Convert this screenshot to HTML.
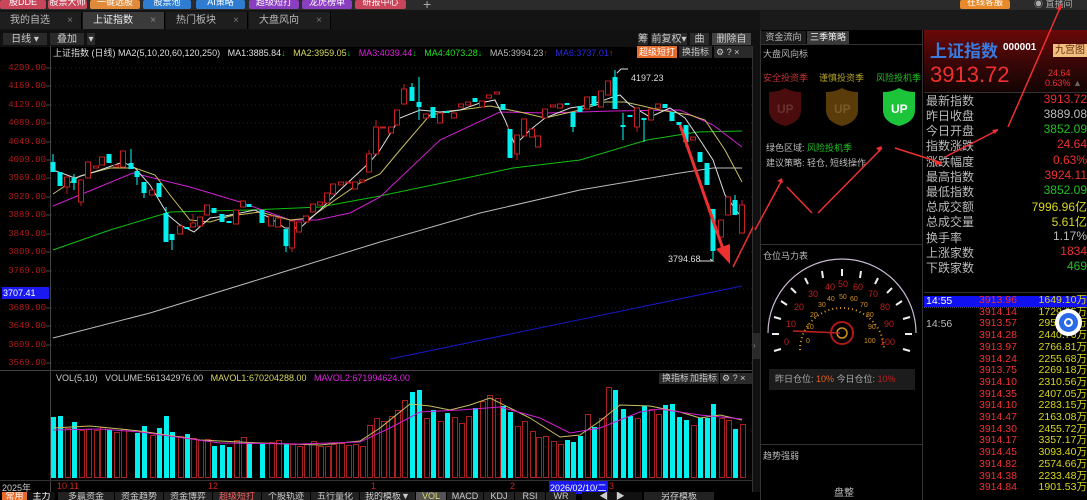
<!DOCTYPE html>
<html><head><meta charset="utf-8">
<style>
*{margin:0;padding:0;box-sizing:border-box}
body{width:1087px;height:500px;background:#000;overflow:hidden;position:relative;font-family:"Liberation Sans","Noto Sans CJK SC",sans-serif;font-size:10px;color:#ccc}
.a{position:absolute;white-space:nowrap}
.btn{position:absolute;top:0;height:9px;border-radius:2px;color:#fff;font-size:9px;line-height:4px;text-align:center;overflow:hidden}
.tab{position:absolute;top:12px;height:17px;background:#1e1e1e;color:#bbb;font-size:10px;line-height:17px;padding-left:10px;border-right:1px solid #000}
.tb{position:absolute;top:32px;height:14px;background:#2a2a2a;color:#ccc;font-size:10px;line-height:14px;text-align:center;border:1px solid #111}
.yl{position:absolute;left:0;width:46px;text-align:right;color:#b01818;font-size:9px;font-family:"Liberation Mono",monospace}
.bt{position:absolute;top:492px;height:8px;background:#222;color:#ccc;font-size:9px;line-height:9px;text-align:center;overflow:hidden}
.ql{position:absolute;left:926px;font-size:12px;color:#bbb}
.qv{position:absolute;right:0;font-size:12px;text-align:right}
.tk{position:absolute;font-size:10.5px;font-family:"Liberation Sans","Noto Sans CJK SC",sans-serif}
</style></head><body>
<!-- top bar -->
<div class="a" style="left:0;top:0;width:1087px;height:10px;background:#2b2b2b"></div>
<div class="btn" style="left:0;width:46px;background:#c8455a">股DDE</div>
<div class="btn" style="left:48px;width:39px;background:#c8455a">股票大师</div>
<div class="btn" style="left:90px;width:50px;background:#e08a3a">一键选股</div>
<div class="btn" style="left:143px;width:48px;background:#2e7dd0">股票池</div>
<div class="btn" style="left:196px;width:49px;background:#2e7dd0">AI策略</div>
<div class="btn" style="left:249px;width:50px;background:#8a3ec0">超级短打</div>
<div class="btn" style="left:302px;width:50px;background:#8a3ec0">龙虎榜单</div>
<div class="btn" style="left:355px;width:51px;background:#c8455a">研报中心</div>
<div class="a" style="left:423px;top:-4px;color:#aaa;font-size:14px">+</div>
<div class="btn" style="left:960px;width:50px;background:#e88a2a">在线客服</div>
<div class="a" style="left:1034px;top:-3px;color:#aaa;font-size:9px">◉ 直播间</div>
<!-- tabs -->
<div class="a" style="left:0;top:10px;width:760px;height:20px;background:#141414"></div>
<div class="a" style="left:760px;top:10px;width:327px;height:20px;background:#1a1a1a"></div>
<div class="tab" style="left:0;width:82px">我的自选<span style="position:absolute;right:8px;color:#777">×</span></div>
<div class="tab" style="left:83px;width:82px;background:#3a3a3a;color:#eee">上证指数<span style="position:absolute;right:8px;color:#888">×</span></div>
<div class="tab" style="left:166px;width:82px">热门板块<span style="position:absolute;right:8px;color:#777">×</span></div>
<div class="tab" style="left:249px;width:82px">大盘风向<span style="position:absolute;right:8px;color:#777">×</span></div>
<!-- toolbar -->
<div class="a" style="left:0;top:30px;width:760px;height:17px;background:#111"></div>
<div class="tb" style="left:2px;width:46px">日线 ▾</div>
<div class="tb" style="left:49px;width:36px">叠加</div>
<div class="tb" style="left:86px;width:10px">▾</div>
<div class="tb" style="left:637px;width:12px">筹</div>
<div class="tb" style="left:650px;width:38px">前复权▾</div>
<div class="tb" style="left:689px;width:21px">曲线</div>
<div class="tb" style="left:711px;width:41px;background:#444">删除自选</div>
<!-- chart header -->
<div class="a" style="left:53px;top:46px;font-size:9px;color:#ddd">上证指数 (日线) MA2(5,10,20,60,120,250) &nbsp; MA1:3885.84<span style="color:#0c0">↓</span> &nbsp; <span style="color:#d8d860">MA2:3959.05<span style="color:#0c0">↓</span></span> &nbsp; <span style="color:#e020e0">MA3:4039.44<span style="color:#0c0">↓</span></span> &nbsp; <span style="color:#20e020">MA4:4073.28<span style="color:#0c0">↓</span></span> &nbsp; <span style="color:#bbb">MA5:3994.23<span style="color:#e02020">↑</span></span> &nbsp; <span style="color:#2a2ae0">MA6:3737.01<span style="color:#e02020">↑</span></span></div>
<div class="a" style="left:637px;top:46px;width:40px;height:12px;background:#e86a2a;color:#fff;font-size:9px;text-align:center;line-height:12px">超级短打</div>
<div class="a" style="left:679px;top:46px;width:33px;height:12px;background:#2a2a2a;color:#ccc;font-size:9px;text-align:center;line-height:12px">换指标</div>
<div class="a" style="left:714px;top:46px;width:38px;height:12px;background:#2a2a2a;color:#ccc;font-size:9px;line-height:12px;padding-left:2px">⚙ ? ×</div>
<!-- left axis -->
<div class="a" style="left:50px;top:46px;width:1px;height:446px;background:#444"></div>
<div class="a" style="left:0;top:370px;width:760px;height:1px;background:#444"></div>
<div class="a" style="left:752px;top:46px;width:1px;height:446px;background:#333"></div>
<div class="yl" style="top:63px">4209.00</div>
<div class="yl" style="top:81px">4169.00</div>
<div class="yl" style="top:100px">4129.00</div>
<div class="yl" style="top:118px">4089.00</div>
<div class="yl" style="top:137px">4049.00</div>
<div class="yl" style="top:155px">4009.00</div>
<div class="yl" style="top:173px">3969.00</div>
<div class="yl" style="top:192px">3929.00</div>
<div class="yl" style="top:210px">3889.00</div>
<div class="yl" style="top:229px">3849.00</div>
<div class="yl" style="top:247px">3809.00</div>
<div class="yl" style="top:266px">3769.00</div>
<div class="yl" style="top:303px">3689.00</div>
<div class="yl" style="top:321px">3649.00</div>
<div class="yl" style="top:340px">3609.00</div>
<div class="yl" style="top:358px">3569.00</div>
<div class="a" style="left:2px;top:287px;width:47px;height:12px;background:#1a1af0;color:#fff;font-size:9px;line-height:12px;padding-left:1px">3707.41</div>

<svg class="a" style="left:0;top:0" width="760" height="500">
<g stroke="#3a1a1a" stroke-dasharray="1,3" stroke-width="1">
<path d="M51 68H752M51 86H752M51 105H752M51 123H752M51 142H752M51 160H752M51 178H752M51 197H752M51 215H752M51 234H752M51 252H752M51 271H752M51 289H752M51 308H752M51 326H752M51 345H752M51 363H752"/>
</g>
<g stroke="#444" stroke-width="1"><path d="M46 68h4M46 86h4M46 105h4M46 123h4M46 142h4M46 160h4M46 178h4M46 197h4M46 215h4M46 234h4M46 252h4M46 271h4M46 308h4M46 326h4M46 345h4M46 363h4"/></g>
<g fill="none" stroke-width="1">
<polyline stroke="#1818c8" points="390,359 742,286"/>
<polyline stroke="#bbb" points="53,338 150,313 267,277 380,242 480,213 580,190 680,173 713,168 742,168"/>
<polyline stroke="#10c010" points="53,250 110,230 170,212 250,210 320,207 380,196 447,182 513,168 580,160 647,140 697,132 742,131"/>
<polyline stroke="#d020d0" points="53,206 133,173 190,187 240,202 290,220 317,220 350,213 380,197 440,140 500,112 547,113 613,111 680,110 713,125 742,147"/>
<polyline stroke="#c8c060" points="53,194 80,176 110,168 135,168 155,175 170,195 190,220 210,222 230,216 260,212 290,220 310,218 335,200 360,183 380,174 400,150 430,115 460,110 490,106 520,112 545,118 580,110 605,102 625,102 660,110 690,115 705,120 725,150 742,182"/>
<polyline stroke="#ddd" points="53,170 75,178 100,170 123,162 135,168 150,185 168,215 180,225 194,232 210,218 225,216 240,213 255,210 270,218 285,228 300,228 320,210 340,190 370,162 380,150 400,118 420,110 440,112 460,110 480,103 495,100 505,120 515,145 530,130 545,118 570,108 590,105 610,98 620,95 630,105 650,117 670,108 685,118 700,140 713,160 725,195 742,218"/>
</g>
<path stroke="#0ff" stroke-width="1" d="M53 154V172M74 174V190M131 149V169M137 177V185M144 193V198M166 207V213M172 240V250M286 246V252M412 83V101M419 77V120M615 70V109M623 113V140M644 120V142M713 251V260M735 195V215M686 142V147M573 127V132"/>
<path stroke="#c02020" stroke-width="1" d="M67 187V194M193 214V227M292 248V252M376 120V127M404 84V89M508 125V130M517 154V160M637 127V132M742 200V205M81 202V206M369 150V154"/>
<g fill="#00f0f0">
<rect x="50.5" y="162" width="5" height="10"/><rect x="57.5" y="172" width="5" height="14"/><rect x="71.5" y="178" width="5" height="5"/><rect x="106.5" y="154" width="5" height="9"/><rect x="128.5" y="163" width="5" height="6"/><rect x="134.5" y="171" width="5" height="6"/><rect x="141.5" y="182" width="5" height="11"/><rect x="156.5" y="183" width="5" height="14"/><rect x="163.5" y="213" width="5" height="29"/><rect x="169.5" y="234" width="5" height="6"/><rect x="184.5" y="227" width="5" height="2"/><rect x="211.5" y="208" width="5" height="5"/><rect x="219.5" y="214" width="5" height="8"/><rect x="226.5" y="221" width="5" height="2"/><rect x="246.5" y="204" width="5" height="3"/><rect x="259.5" y="210" width="5" height="13"/><rect x="283.5" y="229" width="5" height="17"/>
<rect x="409.5" y="87" width="5" height="14"/><rect x="416.5" y="102" width="5" height="5"/><rect x="430.5" y="107" width="5" height="11"/><rect x="444.5" y="111" width="5" height="2"/><rect x="472.5" y="98" width="5" height="4"/><rect x="500.5" y="104" width="5" height="6"/><rect x="507.5" y="129" width="5" height="29"/><rect x="564.5" y="103" width="5" height="2"/><rect x="570.5" y="112" width="5" height="15"/><rect x="577.5" y="106" width="5" height="6"/><rect x="591.5" y="96" width="5" height="10"/><rect x="612.5" y="77" width="5" height="32"/><rect x="620.5" y="125" width="5" height="2"/><rect x="627.5" y="115" width="5" height="2"/><rect x="641.5" y="118" width="5" height="2"/><rect x="662.5" y="104" width="5" height="4"/><rect x="669.5" y="112" width="5" height="9"/><rect x="676.5" y="122" width="5" height="3"/><rect x="683.5" y="125" width="5" height="17"/><rect x="697.5" y="152" width="5" height="10"/><rect x="704.5" y="163" width="5" height="22"/><rect x="710.5" y="209" width="5" height="42"/><rect x="732.5" y="200" width="5" height="15"/>
</g>
<g fill="#000" stroke="#c82020" stroke-width="1">
<rect x="64.5" y="177" width="5" height="10"/><rect x="78.5" y="180" width="5" height="22"/><rect x="85.5" y="162" width="5" height="16"/><rect x="93.5" y="166" width="5" height="2"/><rect x="99.5" y="157" width="5" height="8"/><rect x="113.5" y="165" width="5" height="2"/><rect x="120.5" y="151" width="5" height="16"/><rect x="149.5" y="190" width="5" height="5"/><rect x="177.5" y="226" width="5" height="8"/><rect x="190.5" y="223" width="5" height="4"/><rect x="197.5" y="217" width="5" height="9"/><rect x="204.5" y="205" width="5" height="10"/><rect x="233.5" y="210" width="5" height="14"/><rect x="240.5" y="201" width="5" height="6"/><rect x="268.5" y="216" width="5" height="10"/><rect x="275.5" y="218" width="5" height="9"/><rect x="289.5" y="221" width="5" height="27"/><rect x="296.5" y="222" width="5" height="10"/><rect x="303.5" y="216" width="5" height="6"/><rect x="310.5" y="204" width="5" height="8"/><rect x="317.5" y="202" width="5" height="3"/><rect x="324.5" y="193" width="5" height="10"/><rect x="330.5" y="184" width="5" height="10"/><rect x="338.5" y="182" width="5" height="3"/><rect x="345.5" y="182" width="5" height="1"/><rect x="352.5" y="182" width="5" height="7"/><rect x="359.5" y="180" width="5" height="2"/><rect x="366.5" y="154" width="5" height="18"/><rect x="373.5" y="127" width="5" height="27"/><rect x="380.5" y="127" width="5" height="1"/><rect x="388.5" y="127" width="5" height="6"/><rect x="394.5" y="110" width="5" height="15"/><rect x="401.5" y="89" width="5" height="15"/><rect x="423.5" y="114" width="5" height="4"/><rect x="437.5" y="113" width="5" height="10"/><rect x="451.5" y="113" width="5" height="5"/><rect x="458.5" y="104" width="5" height="3"/><rect x="465.5" y="102" width="5" height="3"/><rect x="479.5" y="101" width="5" height="6"/><rect x="486.5" y="95" width="5" height="3"/><rect x="494.5" y="92" width="5" height="2"/><rect x="514.5" y="135" width="5" height="19"/><rect x="521.5" y="119" width="5" height="17"/><rect x="529.5" y="129" width="5" height="8"/><rect x="535.5" y="136" width="5" height="11"/><rect x="542.5" y="109" width="5" height="9"/><rect x="550.5" y="105" width="5" height="2"/><rect x="557.5" y="104" width="5" height="4"/><rect x="584.5" y="97" width="5" height="12"/><rect x="598.5" y="91" width="5" height="16"/><rect x="605.5" y="81" width="5" height="14"/><rect x="634.5" y="108" width="5" height="19"/><rect x="648.5" y="109" width="5" height="11"/><rect x="655.5" y="104" width="5" height="4"/><rect x="690.5" y="137" width="5" height="3"/><rect x="718.5" y="220" width="5" height="17"/><rect x="725.5" y="197" width="5" height="18"/><rect x="739.5" y="205" width="5" height="28"/>
</g>
<text x="631" y="81" fill="#ddd" font-size="9" font-family="Liberation Sans">4197.23</text>
<path d="M617 73l4-4h7" stroke="#ddd" fill="none"/>
<text x="668" y="262" fill="#ddd" font-size="9" font-family="Liberation Sans">3794.68</text>
<path d="M699 261h14l-3-2" stroke="#ddd" fill="none"/>
<g fill="#00f0f0">
<rect x="51" y="417" width="5" height="61"/><rect x="58" y="416" width="5" height="62"/><rect x="72" y="422" width="5" height="56"/><rect x="107" y="430" width="5" height="48"/><rect x="135" y="433" width="5" height="45"/><rect x="142" y="426" width="5" height="52"/><rect x="157" y="428" width="5" height="50"/><rect x="164" y="416" width="5" height="62"/><rect x="170" y="432" width="5" height="46"/><rect x="185" y="434" width="5" height="44"/><rect x="212" y="446" width="5" height="32"/><rect x="220" y="445" width="5" height="33"/><rect x="227" y="447" width="5" height="31"/><rect x="247" y="443" width="5" height="35"/><rect x="260" y="443" width="5" height="35"/><rect x="284" y="444" width="5" height="34"/>
<rect x="410" y="392" width="5" height="86"/><rect x="417" y="390" width="5" height="88"/><rect x="431" y="410" width="5" height="68"/><rect x="445" y="413" width="5" height="65"/><rect x="473" y="408" width="5" height="70"/><rect x="501" y="406" width="5" height="72"/><rect x="508" y="412" width="5" height="66"/><rect x="565" y="440" width="5" height="38"/><rect x="571" y="442" width="5" height="36"/><rect x="578" y="436" width="5" height="42"/><rect x="592" y="427" width="5" height="51"/><rect x="613" y="390" width="5" height="88"/><rect x="621" y="409" width="5" height="69"/><rect x="628" y="416" width="5" height="62"/><rect x="642" y="406" width="5" height="72"/><rect x="663" y="405" width="5" height="73"/><rect x="670" y="404" width="5" height="74"/><rect x="677" y="417" width="5" height="61"/><rect x="684" y="420" width="5" height="58"/><rect x="698" y="418" width="5" height="60"/><rect x="705" y="418" width="5" height="60"/><rect x="711" y="404" width="5" height="74"/><rect x="733" y="429" width="5" height="49"/>
</g>
<g fill="none" stroke="#a82020" stroke-width="1">
<rect x="65.5" y="428.5" width="5" height="49"/><rect x="79.5" y="430.5" width="5" height="47"/><rect x="86.5" y="429.5" width="5" height="48"/><rect x="94.5" y="430.5" width="5" height="47"/><rect x="100.5" y="427.5" width="5" height="50"/><rect x="114.5" y="432.5" width="5" height="45"/><rect x="121.5" y="429.5" width="5" height="48"/><rect x="150.5" y="435.5" width="5" height="42"/><rect x="178.5" y="436.5" width="5" height="41"/><rect x="191.5" y="438.5" width="5" height="39"/><rect x="198.5" y="440.5" width="5" height="37"/><rect x="205.5" y="439.5" width="5" height="38"/><rect x="234.5" y="440.5" width="5" height="37"/><rect x="241.5" y="437.5" width="5" height="40"/><rect x="269.5" y="442.5" width="5" height="35"/><rect x="276.5" y="440.5" width="5" height="37"/><rect x="290.5" y="444.5" width="5" height="33"/><rect x="297.5" y="446.5" width="5" height="31"/><rect x="304.5" y="444.5" width="5" height="33"/><rect x="311.5" y="441.5" width="5" height="36"/><rect x="318.5" y="446.5" width="5" height="31"/><rect x="325.5" y="446.5" width="5" height="31"/><rect x="331.5" y="444.5" width="5" height="33"/><rect x="339.5" y="443.5" width="5" height="34"/><rect x="346.5" y="445.5" width="5" height="32"/><rect x="353.5" y="444.5" width="5" height="33"/><rect x="360.5" y="446.5" width="5" height="31"/><rect x="367.5" y="425.5" width="5" height="52"/><rect x="374.5" y="418.5" width="5" height="59"/><rect x="381.5" y="421.5" width="5" height="56"/><rect x="389.5" y="416.5" width="5" height="61"/><rect x="395.5" y="410.5" width="5" height="67"/><rect x="402.5" y="400.5" width="5" height="77"/><rect x="424.5" y="418.5" width="5" height="59"/><rect x="438.5" y="421.5" width="5" height="56"/><rect x="452.5" y="417.5" width="5" height="60"/><rect x="459.5" y="423.5" width="5" height="54"/><rect x="466.5" y="416.5" width="5" height="61"/><rect x="480.5" y="401.5" width="5" height="76"/><rect x="487.5" y="395.5" width="5" height="82"/><rect x="495.5" y="398.5" width="5" height="79"/><rect x="515.5" y="426.5" width="5" height="51"/><rect x="522.5" y="421.5" width="5" height="56"/><rect x="530.5" y="431.5" width="5" height="46"/><rect x="536.5" y="437.5" width="5" height="40"/><rect x="543.5" y="436.5" width="5" height="41"/><rect x="551.5" y="441.5" width="5" height="36"/><rect x="558.5" y="444.5" width="5" height="33"/><rect x="585.5" y="414.5" width="5" height="63"/><rect x="599.5" y="418.5" width="5" height="59"/><rect x="606.5" y="387.5" width="5" height="90"/><rect x="635.5" y="418.5" width="5" height="59"/><rect x="649.5" y="409.5" width="5" height="68"/><rect x="656.5" y="414.5" width="5" height="63"/><rect x="691.5" y="425.5" width="5" height="52"/><rect x="719.5" y="418.5" width="5" height="59"/><rect x="726.5" y="420.5" width="5" height="57"/><rect x="740.5" y="424.5" width="5" height="53"/>
</g>
<g fill="none" stroke-width="1">
<polyline stroke="#c8c060" points="53,428 90,426 140,431 200,440 260,443 320,445 360,441 380,428 410,404 430,406 450,410 470,405 490,398 510,408 530,418 560,437 580,435 600,421 620,405 650,406 680,412 700,418 720,415 742,420"/>
<polyline stroke="#d020d0" points="53,430 100,429 140,432 220,443 300,444 360,442 390,428 420,412 460,410 500,407 540,418 570,433 600,428 640,412 660,409 700,415 742,419"/>
</g>
<g stroke="#ee3030" fill="#ee3030">
<path d="M680 125L724 252" stroke-width="3"/>
<path d="M716 249l14 15l0-20z" stroke="none"/>
<path d="M733 267L760 213" stroke-width="1.5"/>
</g>
</svg>
<div class="a" style="left:56px;top:373px;font-size:9px;color:#ccc">VOL(5,10) &nbsp; VOLUME:561342976.00 &nbsp; <span style="color:#d8d860">MAVOL1:670204288.00</span> &nbsp; <span style="color:#e020e0">MAVOL2:671994624.00</span></div>
<div class="a" style="left:659px;top:373px;width:33px;height:11px;background:#2a2a2a;font-size:9px;line-height:11px;text-align:center">换指标</div>
<div class="a" style="left:688px;top:373px;width:31px;height:11px;background:#2a2a2a;font-size:9px;line-height:11px;text-align:center">加指标</div>
<div class="a" style="left:720px;top:373px;width:32px;height:11px;background:#2a2a2a;font-size:9px;line-height:11px;padding-left:2px">⚙ ? ×</div>
<div class="a" style="left:0;top:480px;width:760px;height:1px;background:#333"></div>
<div class="a" style="left:2px;top:481px;font-size:9px;color:#ccc">2025年</div>
<div class="a" style="left:57px;top:481px;font-size:9px;color:#d02020">10 <span>11</span></div>
<div class="a" style="left:208px;top:481px;font-size:9px;color:#d02020">12</div>
<div class="a" style="left:371px;top:481px;font-size:9px;color:#d02020">1</div>
<div class="a" style="left:510px;top:481px;font-size:9px;color:#d02020">2</div>
<div class="a" style="left:549px;top:481px;font-size:9px;color:#fff;background:#1a1af0;padding:0 1px">2026/02/10/二</div>
<div class="a" style="left:609px;top:481px;font-size:9px;color:#d02020">3</div>
<div class="bt" style="left:2px;width:25px;background:#e86a2a;color:#fff">常用</div>
<div class="bt" style="left:28px;width:27px;background:#111;color:#fff">主力</div>
<div class="bt" style="left:58px;width:56px">多赢资金</div>
<div class="bt" style="left:115px;width:48px">资金趋势</div>
<div class="bt" style="left:164px;width:48px">资金博弈</div>
<div class="bt" style="left:213px;width:48px;color:#ff6060">超级短打</div>
<div class="bt" style="left:262px;width:48px">个股轨迹</div>
<div class="bt" style="left:311px;width:48px">五行量化</div>
<div class="bt" style="left:360px;width:55px">我的模板▼</div>
<div class="bt" style="left:416px;width:30px;background:#555;color:#dd6">VOL</div>
<div class="bt" style="left:447px;width:36px">MACD</div>
<div class="bt" style="left:484px;width:30px">KDJ</div>
<div class="bt" style="left:515px;width:30px">RSI</div>
<div class="bt" style="left:546px;width:30px">WR</div>
<div class="bt" style="left:582px;width:60px;background:#111">◀ &nbsp; ▶</div>
<div class="bt" style="left:644px;width:70px">另存模板</div>
<div class="a" style="left:753px;top:46px;width:7px;height:446px;background:#111"></div>
<div class="a" style="left:753px;top:333px;width:7px;height:26px;background:#2a2a2a;color:#888;font-size:8px;line-height:26px">›</div>

<div class="a" style="left:760px;top:30px;width:163px;height:470px;background:#000;border-left:1px solid #333;border-right:1px solid #333"></div>
<div class="a" style="left:761px;top:31px;width:45px;height:13px;background:#1c1c1c;color:#bbb;font-size:9px;line-height:13px;text-align:center">资金流向</div>
<div class="a" style="left:807px;top:31px;width:42px;height:13px;background:#3a3a3a;color:#eee;font-size:9px;line-height:13px;text-align:center">三季策略</div>
<div class="a" style="left:761px;top:44px;width:161px;height:1px;background:#333"></div>
<div class="a" style="left:763px;top:47px;font-size:9px;color:#bbb">大盘风向标</div>
<div class="a" style="left:763px;top:71px;font-size:9px;color:#c03030">安全投资季</div>
<div class="a" style="left:819px;top:71px;font-size:9px;color:#b0a020">谨慎投资季</div>
<div class="a" style="left:876px;top:71px;font-size:9px;color:#20c020">风险投机季</div>
<svg class="a" style="left:760px;top:86px" width="163" height="45">
<path d="M25 2Q18 6 9 6V24Q9 36 25 40Q41 36 41 24V6Q32 6 25 2Z" fill="#4a0c0c"/>
<path d="M82 2Q75 6 66 6V24Q66 36 82 40Q98 36 98 24V6Q89 6 82 2Z" fill="#5a3c0a"/>
<path d="M139 2Q132 6 123 6V24Q123 36 139 40Q155 36 155 24V6Q146 6 139 2Z" fill="#1cc43a"/>
<text x="17" y="27" font-size="12" font-weight="bold" fill="#6a3030" font-family="Liberation Sans">UP</text>
<text x="74" y="27" font-size="12" font-weight="bold" fill="#7a5a2a" font-family="Liberation Sans">UP</text>
<text x="131" y="27" font-size="12" font-weight="bold" fill="#fff" font-family="Liberation Sans">UP</text>
</svg>
<div class="a" style="left:766px;top:141px;font-size:9px;color:#bbb">绿色区域: <span style="color:#20c020">风险投机季</span></div>
<div class="a" style="left:766px;top:156px;font-size:9px;color:#bbb">建议策略: 轻仓, 短线操作</div>
<div class="a" style="left:761px;top:244px;width:161px;height:1px;background:#333"></div>
<div class="a" style="left:763px;top:249px;font-size:9px;color:#bbb">仓位马力表</div>
<svg class="a" style="left:760px;top:255px" width="163" height="115">
<path d="M8 78A74 74 0 1 1 156 78" fill="none" stroke="#c8b8d0" stroke-width="1.2"/>
<g stroke="#eee" stroke-width="2">
<path d="M14 96L21 94M12 79L19 79M14 62L21 64M21 46L27 50M31 33L36 38M45 23L48 29M62 16L63 23M82 14L82 21M101 16L100 23M118 23L115 29M132 33L127 38M142 46L136 50M150 62L143 64M152 79L145 79M150 96L143 94"/>
</g>
<g fill="#c02020" font-size="9" font-family="Liberation Sans">
<text x="24" y="90">0</text><text x="26" y="72">10</text><text x="34" y="55">20</text><text x="48" y="42">30</text><text x="65" y="35">40</text><text x="78" y="32">50</text><text x="93" y="35">60</text><text x="108" y="42">70</text><text x="120" y="55">80</text><text x="124" y="72">90</text><text x="120" y="90">100</text>
</g>
<path d="M40 95A42 42 0 1 1 124 95" fill="none" stroke="#e0a020" stroke-width="2" stroke-dasharray="1,3"/>
<g fill="#d09020" font-size="7" font-family="Liberation Sans">
<text x="46" y="88">0</text><text x="46" y="74">10</text><text x="50" y="62">20</text><text x="58" y="52">30</text><text x="67" y="46">40</text><text x="79" y="44">50</text><text x="90" y="46">60</text><text x="100" y="52">70</text><text x="106" y="62">80</text><text x="108" y="74">90</text><text x="104" y="88">100</text>
</g>
<circle cx="82" cy="78" r="11" fill="none" stroke="#b01818" stroke-width="2"/>
<circle cx="82" cy="78" r="5" fill="none" stroke="#d09020" stroke-width="1.5"/>
<path d="M33 76L80 78" stroke="#c02020" stroke-width="1.5"/>
</svg>
<div class="a" style="left:769px;top:369px;width:146px;height:21px;background:#1c1c1c;font-size:9px;line-height:21px;color:#aaa;padding-left:6px">昨日仓位: <span style="color:#e06020">10%</span> 今日仓位: <span style="color:#c02020">10%</span></div>
<div class="a" style="left:761px;top:444px;width:161px;height:1px;background:#333"></div>
<div class="a" style="left:763px;top:449px;font-size:9px;color:#bbb">趋势强弱</div>
<div class="a" style="left:834px;top:484px;font-size:10px;color:#bbb">盘整</div>

<div class="a" style="left:924px;top:30px;width:163px;height:62px;background:linear-gradient(180deg,#6a0808,#2a0606 70%,#140404)"></div>
<div class="a" style="left:930px;top:37px;font-size:17px;font-weight:bold;color:#3a7be0">上证指数</div>
<div class="a" style="left:1003px;top:42px;font-size:10px;font-weight:bold;color:#fff">000001</div>
<div class="a" style="left:1053px;top:44px;width:34px;height:13px;background:#f0c080;color:#6a2a0a;font-size:10px;line-height:13px;text-align:center">九宫图</div>
<div class="a" style="left:930px;top:62px;font-size:22px;color:#f03030">3913.72</div>
<div class="a" style="left:1048px;top:68px;font-size:9px;color:#f03030">24.64</div>
<div class="a" style="left:1045px;top:78px;font-size:9px;color:#f03030">0.63% <span style="color:#666">▲</span></div>
<div class="a" style="left:924px;top:92px;width:163px;height:1px;background:#333"></div>
<div class="ql" style="top:92px">最新指数</div><div class="qv" style="top:92px;color:#f03030">3913.72</div>
<div class="ql" style="top:107px">昨日收盘</div><div class="qv" style="top:107px;color:#bbb">3889.08</div>
<div class="ql" style="top:122px">今日开盘</div><div class="qv" style="top:122px;color:#20c020">3852.09</div>
<div class="ql" style="top:137px">指数涨跌</div><div class="qv" style="top:137px;color:#f03030">24.64</div>
<div class="ql" style="top:153px">涨跌幅度</div><div class="qv" style="top:153px;color:#f03030">0.63%</div>
<div class="ql" style="top:168px">最高指数</div><div class="qv" style="top:168px;color:#f03030">3924.11</div>
<div class="ql" style="top:183px">最低指数</div><div class="qv" style="top:183px;color:#20c020">3852.09</div>
<div class="ql" style="top:198px">总成交额</div><div class="qv" style="top:198px;color:#d8d820">7996.96亿</div>
<div class="ql" style="top:213px">总成交量</div><div class="qv" style="top:213px;color:#d8d820">5.61亿</div>
<div class="ql" style="top:229px">换手率</div><div class="qv" style="top:229px;color:#bbb">1.17%</div>
<div class="ql" style="top:244px">上涨家数</div><div class="qv" style="top:244px;color:#f03030">1834</div>
<div class="ql" style="top:259px">下跌家数</div><div class="qv" style="top:259px;color:#20c020">469</div>
<div class="a" style="left:924px;top:292px;width:163px;height:1px;background:#333"></div>
<div class="a" style="left:924px;top:296px;width:163px;height:11px;background:#1010f0"></div>
<div class="a" style="left:924px;top:307px;width:163px;border-top:1px dotted #555"></div>
<div class="tk" style="left:926px;top:295px;color:#fff">14:55</div>
<div class="tk" style="left:926px;top:318px;color:#bbb">14:56</div>
<div class="tk" style="left:979px;top:295px;color:#f03030;line-height:11.7px">3913.96<br>3914.14<br>3913.57<br>3914.28<br>3913.97<br>3914.24<br>3913.75<br>3914.10<br>3914.35<br>3914.10<br>3914.47<br>3914.30<br>3914.17<br>3914.45<br>3914.82<br>3914.38<br>3914.84</div>
<div class="tk" style="right:0;top:295px;color:#d8d820;line-height:11.7px;text-align:right">1649.10万<br>1729.05万<br>2957.14万<br>2440.76万<br>2766.81万<br>2255.68万<br>2269.18万<br>2310.56万<br>2407.05万<br>2283.15万<br>2163.08万<br>2455.72万<br>3357.17万<br>3093.40万<br>2574.66万<br>2233.48万<br>1901.53万</div>
<div class="a" style="left:1055px;top:309px;width:27px;height:27px;border-radius:50%;background:#fff"></div>
<div class="a" style="left:1059px;top:313px;width:19px;height:19px;border-radius:50%;background:#2a6ae8"></div>
<div class="a" style="left:1064px;top:318px;width:9px;height:9px;border-radius:50%;border:2px solid #fff"></div>
<svg class="a" style="left:0;top:0" width="1087" height="500">
<g stroke="#ee3030" stroke-width="1.5" fill="none">
<path d="M755 230L782 180M787 187L812 213M818 213L882 148M895 148L942 163M945 157L998 130M1008 127L1060 8"/>
</g>
<g fill="#ee3030"><path d="M782 178l-5 3l6 2z"/><path d="M882 146l-6 2l4 4z"/><path d="M942 164l-6-4l0 5z"/><path d="M998 129l-6 1l3 4z"/><path d="M1061 4l-5 5l5 1z"/></g>
</svg>
</body></html>
